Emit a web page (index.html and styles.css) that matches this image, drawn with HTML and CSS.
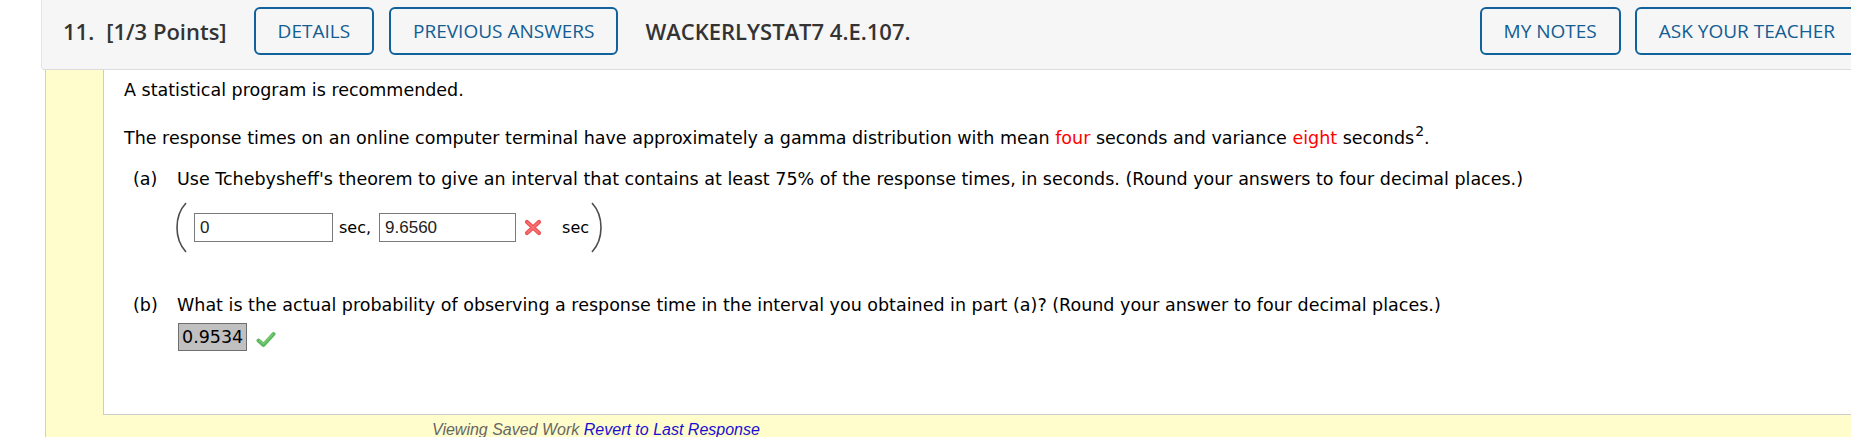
FILE: index.html
```html
<!DOCTYPE html>
<html lang="en">
<head>
<meta charset="utf-8">
<title>WACKERLYSTAT7 4.E.107.</title>
<link rel="stylesheet" href="styles.css">
</head>
<body>
<div class="page">
  <div class="qhead">
    <span class="qnum">11.</span>
    <span class="qpts">[1/3 Points]</span>
    <button class="btn btn-first">DETAILS</button>
    <button class="btn">PREVIOUS ANSWERS</button>
    <span class="qtitle">WACKERLYSTAT7 4.E.107.</span>
    <div class="qhead-right">
      <button class="btn">MY NOTES</button>
      <button class="btn">ASK YOUR TEACHER</button>
    </div>
  </div>
  <div class="qbody">
    <div class="qcontent">
      <p class="line l1">A statistical program is recommended.</p>
      <p class="line l2">The response times on an online computer terminal have approximately a gamma distribution with mean <span class="red">four</span> seconds and variance <span class="red">eight</span> seconds<sup class="sup">2</sup>.</p>
      <div class="part part-a">
        <span class="lbl">(a)</span>
        <div class="part-body">
          <p class="line">Use Tchebysheff's theorem to give an interval that contains at least 75% of the response times, in seconds. (Round your answers to four decimal places.)</p>
          <div class="interval">
            <svg class="paren" width="12" height="51" viewBox="0 0 12 51"><path d="M11 1 C-1 14 -1 37 11 50" fill="none" stroke="#4d4d4d" stroke-width="1.6"/></svg>
            <span class="ansbox box1">0</span>
            <span class="unit unit-comma">sec,</span>
            <span class="ansbox box2">9.6560</span>
            <svg class="xmark" width="18" height="17" viewBox="0 0 18 17"><path d="M3 3 L15 14 M15 3 L3 14" stroke="#f05454" stroke-width="4.2" stroke-linecap="round"/><path d="M3.5 3.5 L14.5 13.5 M14.5 3.5 L3.5 13.5" stroke="#f47a7a" stroke-width="1.4" stroke-linecap="round"/></svg>
            <span class="unit unit-last">sec</span>
            <svg class="paren paren-r" width="12" height="51" viewBox="0 0 12 51"><path d="M1 1 C13 14 13 37 1 50" fill="none" stroke="#4d4d4d" stroke-width="1.6"/></svg>
          </div>
        </div>
      </div>
      <div class="part part-b">
        <span class="lbl">(b)</span>
        <div class="part-body">
          <p class="line">What is the actual probability of observing a response time in the interval you obtained in part (a)? (Round your answer to four decimal places.)</p>
          <div class="answer-row">
            <span class="graded">0.9534</span>
            <svg class="check" width="20" height="17" viewBox="0 0 20 17"><path d="M2.5 9.5 L7.5 14 L17.5 3" fill="none" stroke="#5cb85c" stroke-width="4" stroke-linecap="round" stroke-linejoin="round"/><path d="M3.5 9.5 L7.5 13 L16.5 3.5" fill="none" stroke="#7ccc7c" stroke-width="1.2" stroke-linecap="round"/></svg>
          </div>
        </div>
      </div>
    </div>
    <div class="saved">Viewing Saved Work <a class="revert" href="#">Revert to Last Response</a></div>
  </div>
</div>
</body>
</html>
```

FILE: styles.css
```css
html, body {
  margin: 0;
  padding: 0;
  overflow: hidden;
  background: #fff;
}

.page {
  width: 1881px;
  font-family: "DejaVu Sans", Verdana, sans-serif;
  font-size: 17.5px;
  line-height: 24px;
  color: #000;
}

/* Header */
.qhead {
  box-sizing: border-box;
  height: 70px;
  margin-left: 41px;
  padding: 7px 22px 14px 21px;
  display: flex;
  align-items: center;
  background: #f6f6f6;
  border-left: 1px solid #e4e4e4;
  border-bottom: 1px solid #dcdcdc;
  border-bottom-left-radius: 4px;
  font-family: "Open Sans", "Liberation Sans", sans-serif;
}

.qnum,
.qpts,
.qtitle {
  font-size: 22px;
  font-weight: 600;
  color: #333;
  line-height: 30px;
}

.qnum {
  margin-right: 12px;
}

.qtitle {
  margin-left: 27px;
  font-weight: 650;
}

.btn {
  box-sizing: border-box;
  height: 48px;
  margin: 0 0 0 15px;
  padding: 0 22px;
  border: 2px solid #11629c;
  border-radius: 6px;
  background: transparent;
  color: #135d93;
  font-family: "Open Sans", "Liberation Sans", sans-serif;
  font-size: 19px;
  font-weight: 500;
  line-height: 44px;
  white-space: nowrap;
}

.btn-first {
  margin-left: 27px;
}

.qhead-right {
  margin-left: auto;
  display: flex;
  gap: 14px;
}

.qhead-right .btn {
  margin: 0;
}

/* Body */
.qbody {
  margin-left: 45px;
  padding-left: 57px;
  border-left: 1px solid #cfcfcf;
  background: #fffdcc;
  height: 380px;
}

.qcontent {
  background: #fff;
  border-left: 1px solid #cccccc;
  border-bottom: 1px solid #cccccc;
  padding: 8px 0 63px 20px;
}

.line {
  margin: 0;
  white-space: nowrap;
}

.l2 {
  margin-top: 24px;
}

.red {
  color: #ff0000;
}

.sup {
  font-size: 14px;
  line-height: 0;
  vertical-align: 8px;
  margin-left: 1px;
}

.part {
  display: flex;
  margin-left: 9px;
}

.part-a {
  margin-top: 17px;
}

.part-b {
  margin-top: 40px;
}

.lbl {
  flex: none;
  width: 44px;
}

.interval {
  display: flex;
  align-items: center;
  height: 51px;
  margin-top: 11px;
  margin-left: -2px;
}

.paren {
  flex: none;
  display: block;
}

.ansbox {
  box-sizing: border-box;
  height: 29px;
  padding-left: 5px;
  border: 1px solid #7a7a7a;
  background: #fff;
  font-family: "Liberation Sans", Arial, sans-serif;
  font-size: 17px;
  line-height: 27px;
  color: #222;
}

.box1 {
  width: 139px;
  margin-left: 7px;
}

.box2 {
  width: 137px;
}

.unit {
  font-size: 16px;
}

.unit-comma {
  margin: 0 8px 0 6px;
}

.xmark {
  flex: none;
  margin-left: 8px;
}

.unit-last {
  margin-left: 20px;
}

.paren-r {
  margin-left: 2px;
}

.answer-row {
  display: flex;
  align-items: center;
  margin-top: 6px;
  margin-left: 1px;
}

.graded {
  box-sizing: border-box;
  height: 28px;
  padding: 0 3px;
  border: 1px solid #6f6f6f;
  background: #c0c0c0;
  line-height: 26px;
}

.check {
  flex: none;
  margin-left: 9px;
  margin-top: 4px;
}

.saved {
  padding: 5px 0 0 329px;
  font-family: "Liberation Sans", Arial, sans-serif;
  font-style: italic;
  font-size: 16px;
  line-height: 20px;
  color: #666;
}

.revert {
  color: #1a0dd6;
  text-decoration: none;
}
```
